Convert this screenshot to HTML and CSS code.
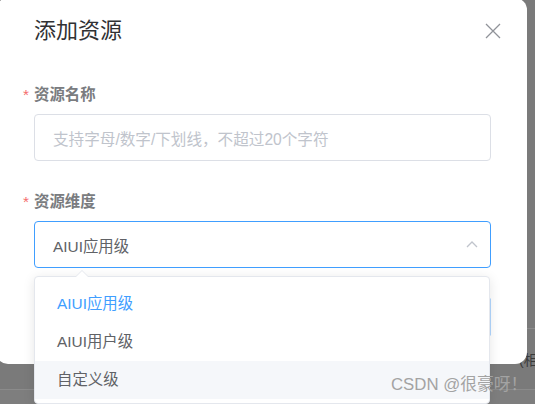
FILE: index.html
```html
<!DOCTYPE html>
<html lang="zh-CN">
<head>
<meta charset="utf-8">
<title>添加资源</title>
<link rel="stylesheet" href="styles.css">
</head>
<body>
<div class="page">
  <div class="row row-a"></div>
  <div class="row row-b"><span class="cell-text">(相</span></div>
  <div class="row row-c"></div>
</div>

<div class="dialog">
  <div class="dialog-header">
    <span class="dialog-title">添加资源</span>
    <button class="close" type="button" aria-label="关闭">
      <svg width="16" height="16" viewBox="0 0 16 16"><path d="M1 1 L15 15 M15 1 L1 15" stroke="#909399" stroke-width="1.3" fill="none"/></svg>
    </button>
  </div>
  <div class="dialog-body">
    <div class="form-item">
      <label class="label required">资源名称</label>
      <div class="input"><span class="placeholder">支持字母/数字/下划线，不超过20个字符</span></div>
    </div>
    <div class="form-item">
      <label class="label required">资源维度</label>
      <div class="select">
        <div class="input is-focus">
          <span class="value">AIUI应用级</span>
          <svg class="chevron" width="12" height="7" viewBox="0 0 12 7"><path d="M1 6 L6 1 L11 6" stroke="#c0c4cc" stroke-width="1.3" fill="none"/></svg>
        </div>
        <div class="dropdown">
          <div class="arrow"></div>
          <ul class="options">
            <li class="option selected">AIUI应用级</li>
            <li class="option">AIUI用户级</li>
            <li class="option hover">自定义级</li>
          </ul>
        </div>
      </div>
    </div>
    <div class="form-item">
      <div class="ghost"></div>
    </div>
  </div>
</div>

<div class="watermark">CSDN @很豪呀！</div>
</body>
</html>
```

FILE: styles.css
```css
html, body {
  margin: 0;
  padding: 0;
}
body {
  width: 535px;
  height: 404px;
  overflow: hidden;
  position: relative;
  background: #7a7a7a;
  font-family: "Liberation Sans", "Noto Sans CJK SC", sans-serif;
}

.row {
  border-bottom: 1px solid #8b8b8b;
}
.row-a {
  height: 328px;
}
.row-b {
  height: 60px;
  display: flex;
  align-items: center;
  padding-left: 519px;
  color: #3a3a3a;
  font-size: 14px;
  white-space: nowrap;
}
.row-c {
  height: 14px;
  background: #7e7e7e;
}

.dialog {
  position: absolute;
  left: -4px;
  top: -2px;
  width: 531px;
  height: 366px;
  background: #fff;
  border-radius: 12px;
}
.dialog-header {
  display: flex;
  align-items: center;
  justify-content: space-between;
  height: 30px;
  padding: 18px 26px 0 38px;
}
.dialog-title {
  font-size: 22px;
  line-height: 30px;
  color: #303133;
}
.close {
  width: 16px;
  height: 16px;
  padding: 0;
  border: 0;
  background: none;
  display: block;
}
.close svg {
  display: block;
}

.dialog-body {
  padding: 38px 36px 0 38px;
}
.form-item {
  margin-bottom: 30px;
}
.label {
  display: block;
  margin-left: -11px;
  margin-bottom: 8px;
  font-size: 15.4px;
  line-height: 22px;
  font-weight: bold;
  color: #7a7c80;
}
.label.required::before {
  content: "*";
  color: #f56c6c;
  font-weight: normal;
  margin-right: 5px;
}

.input {
  height: 47px;
  box-sizing: border-box;
  border: 1px solid #dcdfe6;
  border-radius: 4px;
  display: flex;
  align-items: center;
  padding: 0 12px 0 18px;
  font-size: 15.4px;
}
.input.is-focus {
  border-color: #409eff;
}
.placeholder {
  color: #c0c4cc;
  font-size: 15.6px;
}
.value {
  flex: 1;
  color: #606266;
}
.chevron {
  display: block;
}

.select {
  position: relative;
}
.dropdown {
  position: absolute;
  left: 0;
  top: calc(100% + 8px);
  width: 456px;
  box-sizing: border-box;
  border: 1px solid #e4e7ed;
  border-radius: 4px;
  background: #fff;
  box-shadow: 0 2px 12px rgba(0, 0, 0, 0.1);
  padding: 8px 0 4px;
  z-index: 2;
}
.arrow {
  position: absolute;
  top: -7px;
  left: 41px;
  width: 0;
  height: 0;
  border-style: solid;
  border-width: 0 6px 6px;
  border-color: transparent transparent #e4e7ed;
}
.arrow::after {
  content: "";
  position: absolute;
  top: 1px;
  left: -6px;
  width: 0;
  height: 0;
  border-style: solid;
  border-width: 0 6px 6px;
  border-color: transparent transparent #fff;
}
.options {
  list-style: none;
  margin: 0;
  padding: 0;
}
.option {
  height: 38px;
  line-height: 38px;
  padding: 0 22px;
  font-size: 15.4px;
  color: #606266;
}
.option.selected {
  color: #409eff;
}
.option.hover {
  background: #f5f7fa;
}

.ghost {
  margin-top: 8px;
  margin-left: 20px;
  height: 36px;
  border: 1px solid #b3d8ff;
  border-left: 0;
  border-top-color: transparent;
  border-bottom-color: transparent;
  border-radius: 0;
}

.watermark {
  position: absolute;
  left: 391px;
  top: 374px;
  font-size: 16.8px;
  line-height: 22px;
  color: #a3a3a3;
  white-space: nowrap;
  z-index: 3;
}
```
